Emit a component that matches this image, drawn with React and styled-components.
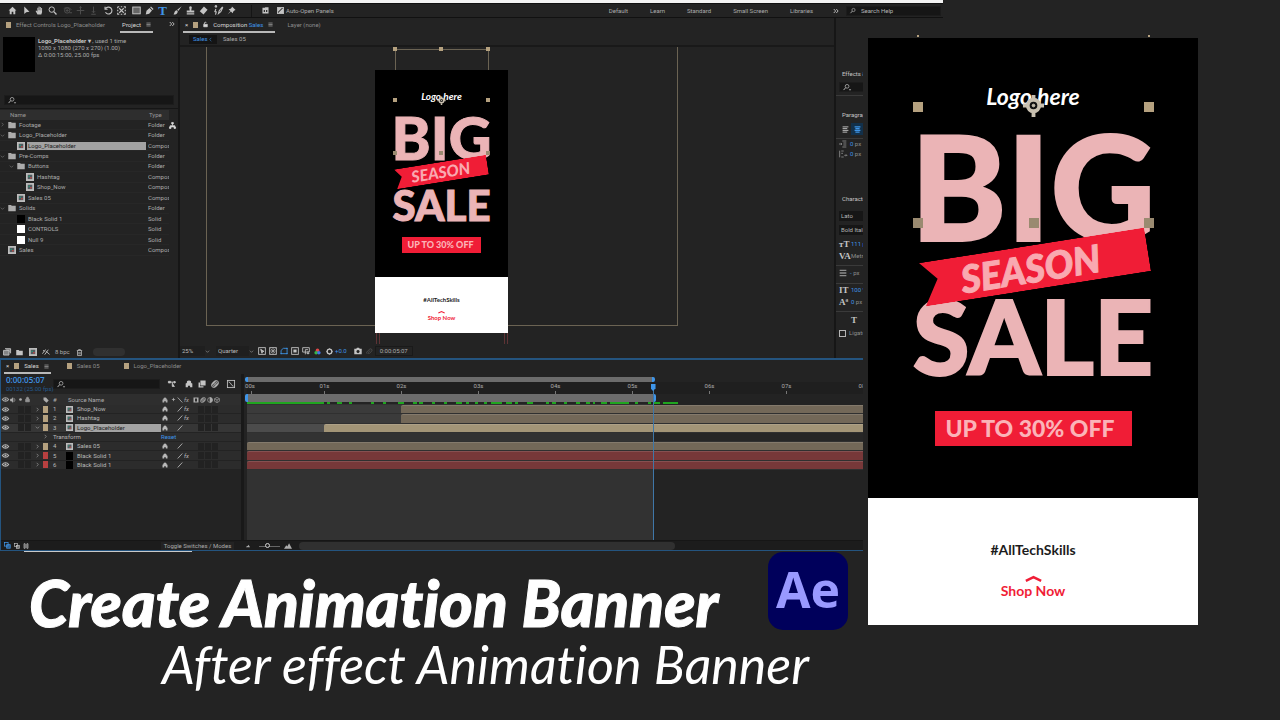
import React from 'react';
import styled, { createGlobalStyle, css } from 'styled-components';

const GlobalStyle = createGlobalStyle`
  * {
    box-sizing: border-box;
  }

  body {
    margin: 0;
    background: #232323;
    color: #acacac;
    font-family: Roboto, "Open Sans", "Noto Sans", sans-serif;
    font-size: 6px;
    line-height: 8px;
  }

  button, input, select {
    font: inherit;
    color: inherit;
  }
`;

const BLUE = '#3f95e8';
const TAN = '#b5a17f';
const PINK = '#ebb4b6';
const RED = '#f01d36';

/* ---------- shared bits ---------- */

const Svg = styled.svg`
  display: block;
  flex: none;
  width: ${p => p.$size || 10}px;
  height: ${p => p.$size || 10}px;
  fill: none;
  stroke: currentColor;
  stroke-width: 1.3;
  overflow: visible;
`;

const shapes = {
  home: <path d="M6 1 0.8 6H2.3V11H4.9V7.6H7.1V11H9.7V6H11.2Z" fill="currentColor" stroke="none" />,
  arrow: <path d="M3 0.5V10.5L5.6 8.2 10 7.8Z" fill="currentColor" stroke="none" />,
  hand: <path d="M3.3 11.3 0.8 6.6 1.7 6 3.2 7.4V2.2H4.4V5.6H4.8V0.8H6V5.6H6.5V1.2H7.7V5.9H8.2V2.6H9.4V8.4L8.4 11.3Z" fill="currentColor" stroke="none" />,
  zoom: <><circle cx="5" cy="4.8" r="3.6" /><path d="M7.7 7.5 11.3 11.3" strokeWidth="1.8" /></>,
  orbit: <><circle cx="5.5" cy="6" r="3.5" /><path d="M1 3.6C4 1.2 9 1.6 11 5M8.4 9H12M5.5 4V8M3.5 6H7.5" /></>,
  move: <path d="M6 0.8V11.2M1 6H11M4.6 2.2 6 0.8 7.4 2.2" />,
  dolly: <path d="M6 0.8V8.8M4 7 6 9 8 7M3 11H9" />,
  rotate: <path d="M2.2 3.4A4.6 4.6 0 1 1 2 8.4M1.4 1V4.4H4.8" strokeWidth="1.5" />,
  anchor: <><path d="M1 1H3M5 1H7M9 1H11V3M11 5V7M11 9V11H9M7 11H5M3 11H1V9M1 7V5M1 3V1" strokeWidth="1.6" /><path d="M3 3 9 9M9 3 3 9" strokeWidth="1.5" /></>,
  rect: <rect x="1" y="1.4" width="10" height="9" fill="#666" />,
  pen: <path d="M1 11.4 2 6.4 6 2.8 9.3 6 5.6 10.2ZM6.8 1.8 8 0.6 11.4 4 10.2 5.2Z" fill="currentColor" stroke="none" />,
  brush: <path d="M11.6 0.4 5.6 5 7 6.6ZM5 5.6 6.4 7.2C6 10.4 3.4 11.6 0.6 11.4 2 10 1.6 6.4 5 5.6Z" fill="currentColor" stroke="none" />,
  stamp: <path d="M4.2 1.2Q6 -0.4 7.8 1.2L7 6H11V8.6H1V6H5ZM1 9.8H11V11.2H1Z" fill="currentColor" stroke="none" />,
  eraser: <path d="M6.6 0.8 11.4 5 6 11.2 1 7Z" fill="currentColor" stroke="none" />,
  roto: <path d="M2.5 1.5A1 1 0 1 1 2.6 1.5M2.5 4 1.2 7.5 3 8 2 11.4M11.4 1 7 6.2 6 10 9 7.6 11.8 1.8" strokeWidth="1.5" />,
  pin: <path d="M6.6 0.6 11.4 5.4 9.8 6 8.4 7.4 7.6 9.8 5.2 7.4 0.8 11.4 4.6 6.8 2.2 4.4 4.8 3.6 6.2 2.2Z" fill="currentColor" stroke="none" />,
  panel: <path d="M0.8 1.4H4.8L5.6 0.6H11.2V11H0.8ZM3 5V8.4H5V5ZM7 5V8.4H9V5Z" fill="currentColor" fillRule="evenodd" stroke="none" />,
  more: <path d="M1.5 2 5.3 6 1.5 10M6.5 2 10.3 6 6.5 10" strokeWidth="1.8" />,
  menu: <path d="M1 2.5H11M1 6H11M1 9.5H11" strokeWidth="1.2" />,
  lock: <path d="M1.5 5.4H10.5V11.6H1.5ZM3.4 5V3A2.6 2.6 0 0 1 8.6 3V5" fill="currentColor" fillOpacity="0.8" />,
  unlock: <><path d="M1.5 5.4H10.5V11.6H1.5Z" fill="currentColor" /><path d="M3.4 5V2.6A2.4 2.4 0 0 1 8 2" strokeWidth="2" /></>,
  find: <><circle cx="7" cy="4" r="3.2" /><path d="M4.6 6.2 1 10.4" strokeWidth="1.7" /></>,
  findMenu: <><circle cx="7" cy="4" r="3.2" /><path d="M4.6 6.2 1 10.4" strokeWidth="1.7" /><path d="M10 9H14L12 11.4Z" fill="currentColor" stroke="none" /></>,
  folder: <path d="M0.4 1.6H4.6L5.6 2.8H11.6V10.8H0.4Z" fill="currentColor" stroke="none" />,
  comp: <><rect x="0" y="0" width="12" height="12" fill="#bcbcbc" stroke="none" /><rect x="2.6" y="2.6" width="6.8" height="6.6" fill="#505a60" stroke="none" /><path d="M3.4 4H6V6H3.4Z" fill="#2f8f72" stroke="none" /><path d="M6 6H8.6V8.4H6Z" fill="#b34a48" stroke="none" /></>,
  tree: <path d="M6 3V6.4M2 9V6.4H10V9M4.6 0.8H7.4V3.4H4.6ZM0.8 8.4H3.4V11H0.8ZM8.6 8.4H11.2V11H8.6Z" fill="currentColor" />,
  footage: <path d="M3 1H11.4V8M0.8 3.6H9V10.6H0.8Z" fill="currentColor" fillOpacity="0.6" />,
  wand: <path d="M0.6 8.6 5.4 2.2M4 10 9.4 2.6M5.6 4.6 11.4 9.6M2 3 3.4 5.4" />,
  trash: <path d="M1.4 2.6H10.6M4.4 2.4V1H7.6V2.4M2.6 3.4V11.2H9.4V3.4M5 5V9.4M7 5V9.4" />,
  down: <path d="M2 4 6 8 10 4" />,
  right: <path d="M4 2 8 6 4 10" />,
  left: <path d="M8 2 4 6 8 10" />,
  guide: <><rect x="1" y="1" width="10" height="10" /><path d="M4 3.4 9 6.6 6.6 7 6 9.4Z" fill="currentColor" /></>,
  grid: <><rect x="1" y="1" width="10" height="10" /><path d="M2.5 2.5 9.5 9.5M9.5 2.5 2.5 9.5M6 1V11M1 6H11" strokeWidth="0.9" /></>,
  mask: <path d="M1.6 10V5L5 2H10.6V10ZM0.4 10H2.8M9.4 2H11.8M9.4 10H11.8" />,
  region: <><rect x="1" y="1" width="10" height="10" /><rect x="3.6" y="3.8" width="4.8" height="4.4" fill="currentColor" stroke="none" /></>,
  views: <path d="M1 1H11V7.6H1ZM5 4V11M5 4H9M9 6V11M7 9.6H11" />,
  rgb: <><circle cx="6" cy="3.8" r="3" fill="#e04848" stroke="none" /><circle cx="3.6" cy="8" r="3" fill="#39b54a" stroke="none" /><circle cx="8.4" cy="8" r="3" fill="#3f74e8" stroke="none" /></>,
  aperture: <><circle cx="6" cy="6" r="4" strokeWidth="2.2" /><path d="M6 0.4V2M6 10V11.6M0.4 6H2M10 6H11.6" /></>,
  camera: <path d="M0.4 2.8H3.4L4.4 1.2H7.6L8.6 2.8H11.6V11H0.4ZM6 4.4A2.4 2.4 0 1 0 6.1 4.4Z" fill="currentColor" fillRule="evenodd" stroke="none" />,
  clip: <path d="M2 10A3 3 0 0 1 2.4 5.6L6.6 1.8A2.4 2.4 0 0 1 10 5L5.8 9.4A1.4 1.4 0 0 1 3.8 7.6L7.4 4" />,
  flow: <path d="M0.6 2H4V4.4H0.6ZM4 3.2H11.4M6.4 3.2V9.6H10M9 1.8 11.4 3.2 9 4.8Z" fill="currentColor" />,
  shy: <path d="M6 0.8A3.2 3.2 0 0 1 9.2 4.4L11 5.4V10.8H7.6V8.6H4.4V10.8H1V5.4L2.8 4.4A3.2 3.2 0 0 1 6 0.8Z" fill="currentColor" stroke="none" />,
  blend: <path d="M3.6 0.8H11.4V8.2H3.6ZM0.8 3.6H3V9.2H8.2V11.2H0.8Z" fill="currentColor" stroke="none" />,
  blur: <><circle cx="7.6" cy="4.4" r="3.6" /><circle cx="6" cy="6" r="3.6" /><circle cx="4.4" cy="7.6" r="3.6" /></>,
  graph: <><rect x="0.6" y="0.6" width="10.8" height="10.8" /><path d="M2.4 2.8C6 3 6 9 9.8 9.4" /></>,
  eye: <><path d="M0.6 6C3 2 9 2 11.4 6 9 10 3 10 0.6 6Z" strokeWidth="1.8" /><circle cx="6" cy="6" r="1.8" fill="currentColor" stroke="none" /></>,
  audio: <><path d="M1 4H3L6 1.4V10.6L3 8H1Z" fill="currentColor" /><path d="M8 2.4A4.4 4.4 0 0 1 8 9.6" /></>,
  dot: <circle cx="6" cy="6" r="3.2" fill="currentColor" stroke="none" />,
  tag: <path d="M1 1H6L11.4 7 7 11.4 1 6Z" fill="currentColor" stroke="none" />,
  star: <path d="M6 1 7.4 4.6 11 6 7.4 7.4 6 11 4.6 7.4 1 6 4.6 4.6Z" fill="currentColor" stroke="none" />,
  slash: <path d="M1.4 11 10.6 1" strokeWidth="1.7" />,
  backslash: <path d="M1.4 1 10.6 11" strokeWidth="1.7" />,
  half: <><circle cx="6" cy="6" r="4.8" /><path d="M6 1.2A4.8 4.8 0 0 1 6 10.8Z" fill="currentColor" /></>,
  cube: <path d="M6 0.8 10.8 3.4V8.6L6 11.2 1.2 8.6V3.4ZM1.2 3.4 6 6 10.8 3.4M6 6V11.2" />,
  film: <path d="M1 1H11V11H1ZM4 3V9H8V3Z" fill="currentColor" fillRule="evenodd" stroke="none" />,
  hills: <path d="M0 10 3.4 5 5 6.6 7.6 2 12 10Z" fill="currentColor" stroke="none" />,
  swap: <><rect x="1" y="1" width="6" height="6" /><rect x="4.6" y="4.6" width="6" height="6" fill="currentColor" fillOpacity="0.5" /></>,
  braces: <path d="M4 1H2.4V11H4M8 1H9.6V11H8M6 1V11M1 4H11M1 8H11" />,
  align: <path d="M1 1.5H11M1 4.5H9M1 7.5H11M1 10.5H9" strokeWidth="1.6" />,
  center: <path d="M1 1.5H11M2.4 4.5H9.6M1 7.5H11M2.4 10.5H9.6" strokeWidth="1.8" />,
  leading: <path d="M1 2H11M1 6H11M1 10H11" strokeWidth="2" />,
  indent: <path d="M5 1.5H11M6.5 4.5H11M6.5 7.5H11M5 10.5H11M0 6H4M2.8 4.4 4.4 6 2.8 7.6" />,
  outdent: <path d="M1 1V11M3.4 1.5H7M3.4 5H6M3.4 10.5H7M8 8H11.6M10.4 6.6 11.8 8 10.4 9.4" />,
};

function Icon({ name, size }) {
  return <Svg viewBox="0 0 12 12" $size={size} aria-hidden="true">{shapes[name]}</Svg>;
}

const IconButton = styled.button`
  display: flex;
  align-items: center;
  justify-content: center;
  flex: none;
  width: ${p => p.$w || 13}px;
  height: 12px;
  padding: 0;
  border: 0;
  background: ${p => p.$bg || 'none'};
  color: ${p => p.$color || '#c4c4c4'};
`;

const TextButton = styled.button`
  padding: 0;
  border: 0;
  background: none;
  white-space: nowrap;
  color: ${p => p.$color || '#acacac'};
`;

const Row = styled.div`
  display: flex;
  align-items: center;
  gap: ${p => p.$gap || 0}px;
`;

const Spacer = styled.div`
  flex: ${p => (p.$w ? 'none' : 1)};
  width: ${p => p.$w || 0}px;
`;

const Swatch = styled.span`
  flex: none;
  width: ${p => p.$w || 5}px;
  height: ${p => p.$h || 6}px;
  background: ${p => p.$color || TAN};
`;

const SearchField = styled.label`
  display: flex;
  align-items: center;
  gap: 5px;
  flex: ${p => (p.$w ? 'none' : 1)};
  width: ${p => (p.$w ? p.$w + 'px' : 'auto')};
  height: 10px;
  padding: 0 3px;
  background: #161616;
  border: 1px solid #1c1c1c;
  color: #b5b5b5;
  overflow: hidden;

  input {
    flex: 1;
    min-width: 0;
    height: 8px;
    padding: 0;
    border: 0;
    background: none;

    &::placeholder {
      color: #b5b5b5;
      opacity: 1;
    }
  }
`;

const Check = styled.input`
  appearance: none;
  flex: none;
  width: 7px;
  height: 7px;
  margin: 0;
  border: 1px solid #b5b5b5;
  background: ${p => (p.checked ? 'linear-gradient(135deg, #c4c4c4 30%, #333 45%, #c4c4c4 60%)' : 'none')};
`;

/* ---------- page ---------- */

const Page = styled.div`
  min-height: 100vh;
  background: #232323;
  overflow: hidden;
`;

const AppHeader = styled.header`
  width: calc(100% - 337px);
  border-top: 3px solid #f3f3f3;
`;

const Toolbar = styled(Row)`
  height: 15px;
  padding: 0 2px 0 6px;
  border-top: 1px solid #111;
  border-bottom: 1px solid #111;
`;

const Workspaces = styled.nav`
  display: flex;
  align-items: center;
  gap: 22px;
`;

const Content = styled.main`
  display: grid;
  grid-template-columns: minmax(0, 1fr) 330px;
  column-gap: 5px;
  align-items: start;
  padding-right: 82px;
`;

const Panels = styled.div`
  display: grid;
  grid-template-columns: 178px minmax(0, 1fr) 27px;
  column-gap: 2px;
  height: 340px;
  background: #161616;

  > * {
    min-width: 0;
    background: #232323;
  }
`;

const Panel = styled.section`
  display: flex;
  flex-direction: column;
  overflow: hidden;
`;

const Tabs = styled.div`
  display: flex;
  align-items: stretch;
  height: ${p => p.$h || 15}px;
`;

const Tab = styled.button`
  display: flex;
  align-items: center;
  gap: 5px;
  padding: 0 2px;
  border: 0;
  border-bottom: 2px solid ${p => (p.$active ? '#b9b9b9' : 'transparent')};
  background: none;
  white-space: nowrap;
  color: ${p => (p.$active ? '#d8d8d8' : '#8c8c8c')};

  em {
    font-style: normal;
    color: ${BLUE};
  }
`;

/* ---------- project panel ---------- */

const AssetInfo = styled.div`
  display: flex;
  gap: 3px;
  height: 62px;
  padding: 4px 3px 0;
  line-height: 7px;

  strong {
    color: #c4c4c4;
  }

  p {
    margin: 0;
    white-space: nowrap;
  }
`;

const Thumb = styled.div`
  width: 32px;
  height: 35px;
  background: #000;
`;

const ProjectTable = styled.table`
  width: 169px;
  height: 146px;
  margin-top: 1px;
  table-layout: fixed;
  border-collapse: collapse;
  border-spacing: 0;

  th, td {
    padding: 0;
    overflow: hidden;
    white-space: nowrap;
    text-align: left;
    font-weight: normal;
    line-height: 8px;
  }

  th {
    height: 10px;
    padding-left: 10px;
    background: #2e2e2e;
    color: #999;
  }

  th:last-child {
    padding-left: 1px;
  }

  td {
    border-bottom: 1px solid #272727;
  }
`;

const Item = styled.div`
  display: flex;
  align-items: center;
  gap: 2px;
  padding-left: ${p => p.$depth * 9}px;
  padding-right: 2px;
  color: ${p => (p.$selected ? '#1c1c1c' : '#acacac')};

  > span:last-child {
    flex: ${p => (p.$selected ? 1 : 'none')};
    padding-left: 1px;
    background: ${p => (p.$selected ? '#a3a3a3' : 'none')};
  }
`;

const Twirl = styled.span`
  display: flex;
  flex: none;
  width: 6px;
  color: #8c8c8c;
`;

const PanelFooter = styled.footer`
  display: flex;
  align-items: center;
  height: ${p => p.$h || 12}px;
  margin-top: auto;
`;

const Pill = styled.div`
  height: 8px;
  flex: ${p => (p.$w ? 'none' : 1)};
  width: ${p => (p.$w ? p.$w + 'px' : 'auto')};
  margin-left: 7px;
  border-radius: 4px;
  background: #303030;
`;

const items = [
  { name: 'Footage', type: 'Folder', kind: 'folder', depth: 0, twirl: 'right' },
  { name: 'Logo_Placeholder', type: 'Folder', kind: 'folder', depth: 0, twirl: 'down' },
  { name: 'Logo_Placeholder', type: 'Composition', kind: 'comp', depth: 1, selected: true },
  { name: 'Pre-Comps', type: 'Folder', kind: 'folder', depth: 0, twirl: 'down' },
  { name: 'Buttons', type: 'Folder', kind: 'folder', depth: 1, twirl: 'down' },
  { name: 'Hashtag', type: 'Composition', kind: 'comp', depth: 2 },
  { name: 'Shop_Now', type: 'Composition', kind: 'comp', depth: 2 },
  { name: 'Sales 05', type: 'Composition', kind: 'comp', depth: 1 },
  { name: 'Solids', type: 'Folder', kind: 'folder', depth: 0, twirl: 'down' },
  { name: 'Black Solid 1', type: 'Solid', color: '#000', depth: 1 },
  { name: 'CONTROLS', type: 'Solid', color: '#fff', depth: 1 },
  { name: 'Null 9', type: 'Solid', color: '#fff', depth: 1 },
  { name: 'Sales', type: 'Composition', kind: 'comp', depth: 0 },
];

const TableWrap = styled.div`
  display: flex;
  align-items: flex-start;
  border-top: 1px solid #161616;
  margin-top: 3px;

  > svg {
    margin-top: 13px;
    color: #d8d8d8;
  }
`;

function ProjectPanel() {
  return (
    <Panel>
      <Tabs>
        <Spacer $w={4} />
        <Tab><Swatch />Effect Controls Logo_Placeholder</Tab>
        <Spacer />
        <Tab $active>Project <Icon name="menu" size={5} /></Tab>
        <Spacer $w={12} />
        <IconButton aria-label="More panels"><Icon name="more" size={6} /></IconButton>
      </Tabs>
      <AssetInfo>
        <Thumb />
        <div>
          <p><strong>Logo_Placeholder ▾</strong> , used 1 time</p>
          <p>1080 x 1080 (270 x 270) (1.00)</p>
          <p>Δ 0:00:15:00, 25.00 fps</p>
        </div>
      </AssetInfo>
      <Row>
        <Spacer $w={4} />
        <SearchField>
          <Icon name="findMenu" size={7} />
          <input aria-label="Search project" />
        </SearchField>
        <Spacer $w={4} />
      </Row>
      <TableWrap>
        <ProjectTable>
          <colgroup>
            <col />
            <col width="21" />
          </colgroup>
          <thead>
            <tr><th>Name</th><th>Type</th></tr>
          </thead>
          <tbody>
            {items.map((item, i) => (
              <tr key={i}>
                <td>
                  <Item $depth={item.depth} $selected={item.selected}>
                    <Twirl>{item.twirl && <Icon name={item.twirl} size={5} />}</Twirl>
                    {item.kind
                      ? <Icon name={item.kind} size={8} />
                      : <Swatch $w={8} $h={8} $color={item.color} />}
                    <span>{item.name}</span>
                  </Item>
                </td>
                <td>{item.type}</td>
              </tr>
            ))}
          </tbody>
        </ProjectTable>
        <Icon name="tree" size={7} />
      </TableWrap>
      <PanelFooter>
        <IconButton aria-label="Interpret footage"><Icon name="footage" size={8} /></IconButton>
        <IconButton aria-label="New folder"><Icon name="folder" size={7} /></IconButton>
        <IconButton aria-label="New composition"><Icon name="comp" size={8} /></IconButton>
        <IconButton aria-label="Adjust"><Icon name="wand" size={8} /></IconButton>
        <Spacer $w={3} />
        <TextButton>8 bpc</TextButton>
        <Spacer $w={3} />
        <IconButton aria-label="Delete"><Icon name="trash" size={7} /></IconButton>
        <Pill $w={32} />
      </PanelFooter>
    </Panel>
  );
}

/* ---------- banner artwork ---------- */

const large = {
  width: 330, height: 587, split: 460,
  logo: 23, logoTop: 47,
  big: 145, bigTop: 99, sale: 103, saleTop: 263, outline: 2,
  ribbonW: 228, ribbonH: 44, ribbonX: 53, ribbonY: 207, ribbonText: 38, ribbonPad: 39,
  offer: 23, offerTop: 373, offerW: 197, offerH: 35, offerPad: 6,
  tag: 14, tagTop: 505, shop: 14, shopTop: 546, chevron: 17, chevronTop: 538,
};

const small = {
  width: 133, height: 263, split: 207,
  logo: 10, logoTop: 21,
  big: 59, bigTop: 48, sale: 42, saleTop: 121, outline: 1,
  ribbonW: 93, ribbonH: 20, ribbonX: 20, ribbonY: 92, ribbonText: 16, ribbonPad: 16,
  offer: 9, offerTop: 167, offerW: 79, offerH: 16, offerPad: 2,
  tag: 6, tagTop: 227, shop: 6, shopTop: 245, chevron: 7, chevronTop: 241,
};

const Art = styled.article`
  position: relative;
  width: ${p => p.$s.width}px;
  height: ${p => p.$s.height}px;
  background: linear-gradient(#000 ${p => p.$s.split}px, #fff ${p => p.$s.split}px);
  font-family: Lato, sans-serif;
  text-align: center;
`;

// every line of the artwork is a layer on the canvas
const Layer = styled.div`
  position: absolute;
  left: 0;
  right: 0;
  top: ${p => p.$top}px;
  font-size: ${p => p.$size}px;
  line-height: ${p => p.$line || p.$size}px;
  font-weight: ${p => p.$weight || 700};
  font-style: ${p => (p.$italic ? 'italic' : 'normal')};
  color: ${p => p.$color};
  -webkit-text-stroke: ${p => p.$outline || 0}px ${p => p.$color};
  white-space: nowrap;

  svg {
    margin: 0 auto;
  }
`;

const Ribbon = styled.div`
  position: absolute;
  left: ${p => p.$s.ribbonX}px;
  top: ${p => p.$s.ribbonY}px;
  width: ${p => p.$s.ribbonW}px;
  height: ${p => p.$s.ribbonH}px;
  padding-left: ${p => p.$s.ribbonPad}px;
  transform: rotate(-9deg);
  clip-path: polygon(0 0, 100% 0, 100% 100%, 0 100%, 7% 42%);
  background: ${RED};
  color: #f9a9b0;
  font-size: ${p => p.$s.ribbonText}px;
  line-height: ${p => p.$s.ribbonH}px;
  font-weight: 900;
  font-style: italic;
  text-align: left;
  -webkit-text-stroke: ${p => p.$s.outline - 1}px #f9a9b0;
`;

const Offer = styled.span`
  display: block;
  width: ${p => p.$s.offerW}px;
  height: ${p => p.$s.offerH}px;
  margin: 0 auto;
  padding-right: ${p => p.$s.offerPad}px;
  background: ${RED};
  line-height: ${p => p.$s.offerH}px;
`;

const Handle = styled.i`
  position: absolute;
  left: ${p => p.$x}px;
  top: ${p => p.$y}px;
  width: ${p => p.$size}px;
  height: ${p => p.$size}px;
  background: ${p => (p.$dim ? '#9a8a70' : TAN)};
`;

const Anchor = styled.svg`
  position: absolute;
  left: ${p => p.$x}px;
  top: ${p => p.$y}px;
  width: ${p => p.$size}px;
  height: ${p => p.$size}px;
  fill: none;
  stroke: #c9c0b0;
  stroke-width: 4;
`;

function Banner({ s }) {
  return (
    <Art $s={s}>
      <Layer $top={s.logoTop} $size={s.logo} $italic $color="#fff">Logo here</Layer>
      <Layer $top={s.bigTop} $size={s.big} $line={Math.round(s.big * 0.67)} $weight={900} $outline={s.outline} $color={PINK}>BIG</Layer>
      <Layer $top={s.saleTop} $size={s.sale} $line={Math.round(s.sale * 0.67)} $weight={900} $outline={s.outline} $color={PINK}>SALE</Layer>
      <Ribbon $s={s}>SEASON</Ribbon>
      <Layer $top={s.offerTop} $size={s.offer} $weight={900} $color="#fbb3b8"><Offer $s={s}>UP TO 30% OFF</Offer></Layer>
      <Layer $top={s.tagTop} $size={s.tag} $color="#1c1c1c">#AllTechSkills</Layer>
      <Layer $top={s.chevronTop} $size={s.chevron} $line={s.chevron} $color={RED}>
        <Svg viewBox="0 0 12 4" style={{ width: s.chevron, height: s.chevron / 3 }}>
          <path d="M0.6 3.4 6 0.8 11.4 3.4" strokeWidth="1.8" />
        </Svg>
      </Layer>
      <Layer $top={s.shopTop} $size={s.shop} $color={RED}>Shop Now</Layer>
    </Art>
  );
}

function AnchorPoint({ x, y, size }) {
  return (
    <Anchor viewBox="0 0 24 24" $x={x} $y={y} $size={size} aria-hidden="true">
      <circle cx="12" cy="12" r="6" fill="#111" />
      <circle cx="12" cy="12" r="1.4" fill="#c9c0b0" strokeWidth="1" />
      <path d="M12 1V5M12 19V24M1 12H5M19 12H23" />
    </Anchor>
  );
}

/* ---------- composition panel ---------- */

const Breadcrumb = styled(Row)`
  height: 14px;
  padding-left: 9px;
  border-bottom: 2px solid #191919;
`;

const Crumb = styled.button`
  display: flex;
  align-items: center;
  justify-content: space-between;
  height: 9px;
  padding: 0 4px;
  border: 0;
  background: ${p => (p.$active ? '#141414' : 'none')};
  color: ${p => (p.$active ? BLUE : '#acacac')};
  min-width: 28px;
`;

const Viewer = styled.div`
  position: relative;
  flex: 1;
  overflow: hidden;
`;

const Guide = styled.div`
  position: absolute;
  left: ${p => p.$x}px;
  top: ${p => p.$y}px;
  width: ${p => p.$w}px;
  height: ${p => p.$h}px;
  border: 1px solid ${p => p.$color || '#6b6353'};
  border-top-width: ${p => (p.$open ? 0 : 1)}px;
`;

const ArtSlot = styled.div`
  position: absolute;
  left: 195px;
  top: 23px;
`;

const Select = styled.select`
  appearance: none;
  width: ${p => p.$w}px;
  height: 10px;
  padding: 0 2px;
  border: 0;
  background: #1f1f1f;
  color: #b9b9b9;
`;

const Timecode = styled.span`
  padding: 0 4px;
  border: 1px solid #1a1a1a;
`;

const handles = [[213, 0], [259, 0], [306, 0], [213, 51], [306, 51], [213, 104, 1], [259, 104, 1], [306, 104, 1]];

function CompositionPanel() {
  return (
    <Panel>
      <Tabs>
        <Spacer $w={3} />
        <Tab $active>
          <span>×</span><Swatch /><Icon name="unlock" size={5} />
          <span>Composition <em>Sales</em></span>
          <Icon name="menu" size={5} />
        </Tab>
        <Spacer $w={10} />
        <Tab>Layer (none)</Tab>
      </Tabs>
      <Breadcrumb $gap={2}>
        <Crumb $active>Sales <Icon name="left" size={5} /></Crumb>
        <Crumb>Sales 05</Crumb>
      </Breadcrumb>
      <Viewer>
        <Guide $x={26} $y={0} $w={472} $h={279} $open />
        <Guide $x={196} $y={240} $w={132} $h={80} $color="#5e3335" />
        <Guide $x={199} $y={240} $w={126} $h={80} $color="#5e3335" />
        <Guide $x={215} $y={2} $w={94} $h={40} />
        <ArtSlot><Banner s={small} /></ArtSlot>
        {handles.map(([x, y, dim]) => <Handle key={`${x}-${y}`} $x={x} $y={y} $dim={dim} $size={4} />)}
        <AnchorPoint x={257} y={49} size={9} />
      </Viewer>
      <PanelFooter $h={14}>
        <Select $w={25} aria-label="Magnification" defaultValue="25%"><option>25%</option></Select>
        <Icon name="down" size={5} />
        <Spacer $w={6} />
        <Select $w={33} aria-label="Resolution" defaultValue="Quarter"><option>Quarter</option></Select>
        <Icon name="down" size={5} />
        <Spacer $w={2} />
        <IconButton $w={11} aria-label="Choose grid"><Icon name="guide" size={8} /></IconButton>
        <IconButton $w={11} aria-label="Transparency grid"><Icon name="grid" size={8} /></IconButton>
        <IconButton $w={11} $color={BLUE} aria-label="Mask visibility"><Icon name="mask" size={8} /></IconButton>
        <IconButton $w={11} aria-label="Region of interest"><Icon name="region" size={8} /></IconButton>
        <IconButton $w={11} aria-label="View layout"><Icon name="views" size={8} /></IconButton>
        <IconButton $w={12} aria-label="Channels"><Icon name="rgb" size={7} /></IconButton>
        <IconButton $w={12} aria-label="Reset exposure"><Icon name="aperture" size={7} /></IconButton>
        <TextButton $color={BLUE}>+0.0</TextButton>
        <Spacer $w={6} />
        <IconButton $w={11} aria-label="Take snapshot"><Icon name="camera" size={8} /></IconButton>
        <IconButton $w={11} $color="#555" aria-label="Show snapshot"><Icon name="clip" size={7} /></IconButton>
        <Timecode>0:00:05:07</Timecode>
      </PanelFooter>
    </Panel>
  );
}

/* ---------- side panel ---------- */

const SidePanel = styled.aside`
  display: flex;
  flex-direction: column;
  overflow: hidden;
  white-space: nowrap;
`;

const SideGroup = styled.div`
  padding: ${p => p.$pad || 0}px 0 ${p => p.$end || 0}px 3px;
  border-top: ${p => (p.$line ? '1px solid #3a3a3a' : 0)};
`;

const SideTitle = styled.h2`
  margin: 0;
  padding-left: 3px;
  font-size: 6px;
  font-weight: normal;
  line-height: 16px;
  color: #c4c4c4;
`;

const Metric = styled.div`
  display: flex;
  align-items: center;
  gap: 3px;
  height: ${p => p.$h || 12}px;
  color: #8c8c8c;

  b {
    width: 9px;
    flex: none;
    font: bold 9px/10px "Liberation Serif", serif;
    color: #c4c4c4;
  }

  em {
    font-style: normal;
    color: ${BLUE};
  }
`;

const FontField = styled.select`
  appearance: none;
  display: block;
  width: 36px;
  height: 10px;
  margin-top: 4px;
  padding: 0 2px;
  border: 0;
  background: #161616;
  color: #b5b5b5;
`;

function CharacterPanel() {
  return (
    <SidePanel>
      <SideGroup $pad={48} $end={3}>
        <SideTitle>Effects &amp; Presets</SideTitle>
        <SearchField $w={40}><Icon name="findMenu" size={7} /><input aria-label="Search effects" /></SearchField>
      </SideGroup>
      <SideGroup $pad={11} $end={3} $line>
        <SideTitle>Paragraph</SideTitle>
        <Row>
          <IconButton $w={12} aria-label="Align left"><Icon name="align" size={7} /></IconButton>
          <IconButton $w={12} $bg="#12304a" $color={BLUE} aria-label="Align center"><Icon name="center" size={7} /></IconButton>
        </Row>
      </SideGroup>
      <SideGroup $line $end={32}>
        <Metric $h={10}><Icon name="indent" size={8} /><span><em>0</em> px</span></Metric>
        <Metric $h={10}><Icon name="outdent" size={8} /><span><em>0</em> px</span></Metric>
      </SideGroup>
      <SideGroup $end={3}>
        <SideTitle>Character</SideTitle>
        <FontField aria-label="Font family" defaultValue="Lato"><option>Lato</option></FontField>
        <FontField aria-label="Font style" defaultValue="Bold Italic"><option>Bold Italic</option></FontField>
      </SideGroup>
      <SideGroup $end={3}>
        <Metric><b>тT</b><em>111 px</em></Metric>
        <Metric><b>VA</b><span>Metrics</span></Metric>
      </SideGroup>
      <SideGroup $line $pad={1} $end={4}>
        <Metric><Icon name="leading" size={8} /><span><em>-</em> px</span></Metric>
      </SideGroup>
      <SideGroup $line $end={3}>
        <Metric><b>IT</b><em>100 %</em></Metric>
        <Metric><b>Aª</b><span><em>0</em> px</span></Metric>
      </SideGroup>
      <SideGroup $line $pad={1}>
        <Metric $h={14}><b /><b>T</b></Metric>
        <Metric as="label"><Check type="checkbox" /><span>Ligatures</span></Metric>
      </SideGroup>
    </SidePanel>
  );
}

/* ---------- timeline ---------- */

const TOTAL = 8;
const PLAYHEAD = 5.28;

const layers = [
  { n: 1, name: 'Shop_Now', start: 2, fx: true },
  { n: 2, name: 'Hashtag', start: 2, fx: true },
  { n: 3, name: 'Logo_Placeholder', start: 1, selected: true },
  { transform: true },
  { n: 4, name: 'Sales 05', start: 0 },
  { n: 5, name: 'Black Solid 1', start: 0, fx: true, solid: true },
  { n: 6, name: 'Black Solid 1', start: 0, solid: true },
];

// cached frame runs, [from, length] on a 616 unit ruler
const cached = [
  [0, 77], [80, 3], [90, 5], [102, 3], [124, 3], [136, 3], [151, 6], [166, 4], [172, 4], [185, 3],
  [197, 3], [209, 6], [219, 3], [228, 3], [237, 3], [244, 11], [259, 6], [268, 3], [280, 6], [299, 3],
  [305, 4], [317, 3], [329, 4], [339, 4], [346, 2], [354, 6], [363, 19], [388, 3], [401, 3], [406, 7], [416, 15],
];

const TimelineShell = styled.section`
  height: 193px;
  border: solid #24547f;
  border-width: 2px 0 1px 1px;
  background: #232323;
  overflow: hidden;
  display: flex;
  flex-direction: column;
`;

const TimelineBody = styled.div`
  flex: 1;
  display: grid;
  grid-template-columns: 243px minmax(0, 1fr);
  min-height: 0;
`;

const LayerList = styled.div`
  border-right: 3px solid #191919;
`;

const TimeControls = styled(Row)`
  height: 20px;
  padding-left: 5px;
`;

const CurrentTime = styled.div`
  width: 47px;
  color: #24598c;
  white-space: nowrap;

  strong {
    display: block;
    font: 600 8px/10px "Open Sans", "Noto Sans", sans-serif;
    color: ${BLUE};
  }
`;

const LayerGrid = styled.div`
  display: grid;
  grid-template-columns: 16px 17px 8px 10px 13px 9px 86px 10px 6px 7px 9px 1fr;
  align-items: center;
  padding-left: 1px;
  white-space: nowrap;
`;

const LayerHead = styled(LayerGrid)`
  height: 11px;
  background: #2e2e2e;
  color: #acacac;
`;

const SourceName = styled.span`
  padding-left: 2px;
`;

const Rows = styled.div`
  display: grid;
  height: 65px;
  grid-auto-rows: minmax(0, 1fr);
`;

const LayerRow = styled(LayerGrid)`
  background: ${p => (p.$selected ? '#363636' : '#2c2c2c')};
  border-bottom: 1px solid #232323;
  color: #b9b9b9;
  line-height: 8px;
`;

const LayerName = styled.span`
  padding-left: 2px;
  overflow: hidden;
  ${p => p.$selected && css`
    background: #a3a3a3;
    color: #1c1c1c;
  `}
`;

const Cells = styled.span`
  display: grid;
  grid-template-columns: repeat(${p => p.$n}, 6px);
  gap: 1px;
  height: 7px;

  i {
    background: #222;
  }
`;

const Tracks = styled.div`
  position: relative;
  display: flex;
  flex-direction: column;
  overflow: hidden;
  padding: 3px 0 0 3px;
`;

const Span = styled.div`
  height: ${p => p.$h}px;
  margin-left: -2px;
  background: #6c6c6c;
  border-left: 3px solid ${BLUE};
  border-right: 3px solid ${BLUE};
  border-radius: 2px;
`;

const Ruler = styled.div`
  display: grid;
  grid-template-columns: repeat(8, minmax(0, 1fr)) 0;
  height: 12px;
  background: #1f1f1f;

  span {
    margin-left: -6px;
    width: 13px;
    text-align: center;
    background: linear-gradient(#777, #777) 6px 9px / 1px 3px no-repeat;
  }

  span:first-child {
    margin-left: -2px;
    text-align: left;
  }
`;

const Cache = styled.svg`
  display: block;
  width: 100%;
  height: 2px;
  fill: #1fa51f;
`;

const TrackArea = styled.div`
  flex: 1;
  padding-top: 1px;
  background: linear-gradient(to right, #323232 ${p => p.$at}%, #232323 ${p => p.$at}%);
`;

const Lane = styled.div`
  border-bottom: 1px solid #303030;
  background: linear-gradient(to right, ${p => p.$color || '#3b3b3b'} ${p => p.$at}%, #262626 ${p => p.$at}%);
`;

const Bar = styled.div`
  height: 100%;
  background: ${p => p.$color};
  border-top: 1px solid rgba(255, 255, 255, 0.12);
  border-top-left-radius: 2px;
`;

const Playhead = styled.div`
  position: absolute;
  top: 10px;
  bottom: 0;
  width: 1px;
  background: #3f77a8;

  &::before {
    content: '';
    position: absolute;
    left: -2px;
    top: 0;
    width: 5px;
    height: 7px;
    background: ${BLUE};
    clip-path: polygon(0 0, 100% 0, 100% 60%, 50% 100%, 0 60%);
  }
`;

const TimelineFooter = styled(Row)`
  height: 10px;
  padding-left: 2px;
  border-top: 1px solid #161616;
  background: #1c1c1c;
`;

const ModesButton = styled(TextButton)`
  width: 73px;
  background: #232323;
`;

const ZoomSlider = styled.input`
  appearance: none;
  width: 21px;
  height: 6px;
  margin: 0 4px;
  background: linear-gradient(#666, #666) 0 3px / 100% 1px no-repeat;

  &::-webkit-slider-thumb {
    appearance: none;
    width: 5px;
    height: 5px;
    border: 1px solid #d0d0d0;
    border-radius: 50%;
    background: #232323;
  }
`;

function barColor(layer) {
  if (layer.solid) return '#773839';
  return layer.selected ? '#a39577' : '#736858';
}

function TimelineLayer({ layer }) {
  if (layer.transform) {
    return (
      <LayerRow>
        <span /><span /><span />
        <span><Icon name="right" size={5} /></span>
        <span>Transform</span><span /><span />
        <TextButton $color={BLUE}>Reset</TextButton>
      </LayerRow>
    );
  }
  return (
    <LayerRow $selected={layer.selected}>
      <Icon name="eye" size={7} />
      <Cells $n={2}><i /><i /></Cells>
      <Icon name={layer.selected ? 'down' : 'right'} size={5} />
      <Swatch $h={7} $color={layer.solid ? '#b84040' : TAN} />
      <span>{layer.n}</span>
      {layer.solid ? <Swatch $w={7} $h={8} $color="#000" /> : <Icon name="comp" size={7} />}
      <LayerName $selected={layer.selected}>{layer.name}</LayerName>
      <Row><Spacer $w={1} /><Icon name="shy" size={6} /></Row>
      <span />
      <Icon name="slash" size={6} />
      <i>{layer.fx ? 'fx' : ''}</i>
      <Row><Spacer $w={5} /><Cells $n={3}><i /><i /><i /></Cells></Row>
    </LayerRow>
  );
}

function Timeline() {
  const at = (PLAYHEAD / TOTAL) * 100;
  return (
    <TimelineShell>
      <Tabs $h={14}>
        <Spacer $w={3} />
        <Tab $active><span>×</span><Swatch />Sales <Icon name="menu" size={5} /></Tab>
        <Spacer $w={14} />
        <Tab><Swatch />Sales 05</Tab>
        <Spacer $w={20} />
        <Tab><Swatch />Logo_Placeholder</Tab>
      </Tabs>
      <TimelineBody>
        <LayerList>
          <TimeControls>
            <CurrentTime><strong>0:00:05:07</strong>00132 (25.00 fps)</CurrentTime>
            <SearchField $w={107}><Icon name="findMenu" size={7} /><input aria-label="Search layers" /></SearchField>
            <Spacer $w={5} />
            <IconButton aria-label="Mini-flowchart"><Icon name="flow" size={8} /></IconButton>
            <Spacer $w={4} />
            <IconButton aria-label="Hide shy layers"><Icon name="shy" size={8} /></IconButton>
            <IconButton aria-label="Frame blending"><Icon name="blend" size={8} /></IconButton>
            <IconButton aria-label="Motion blur"><Icon name="blur" size={8} /></IconButton>
            <Spacer $w={3} />
            <IconButton aria-label="Graph editor"><Icon name="graph" size={8} /></IconButton>
          </TimeControls>
          <LayerHead>
            <Row $gap={1}><Icon name="eye" size={7} /><Icon name="audio" size={6} /></Row>
            <Row $gap={2}><Icon name="dot" size={5} /><Icon name="lock" size={5} /></Row>
            <span />
            <Icon name="tag" size={6} />
            <span>#</span>
            <SourceName>Source Name</SourceName>
            <span />
            <Row><Spacer $w={1} /><Icon name="shy" size={6} /></Row>
            <Icon name="star" size={5} />
            <Icon name="backslash" size={6} />
            <i>fx</i>
            <Row $gap={1}>
              <Icon name="film" size={6} /><Icon name="blur" size={6} /><Icon name="half" size={6} /><Icon name="cube" size={6} />
            </Row>
          </LayerHead>
          <Rows>
            {layers.map((layer, i) => <TimelineLayer key={i} layer={layer} />)}
          </Rows>
        </LayerList>
        <Tracks>
          <Span $h={5} style={{ width: `calc(${at}% + 3px)` }} />
          <Ruler>
            {Array.from({ length: 9 }, (_, i) => <span key={i}>0{i}s</span>)}
          </Ruler>
          <Span $h={8} style={{ width: `calc(${at}% + 4px)` }} />
          <Cache viewBox="0 0 616 2" preserveAspectRatio="none" aria-hidden="true">
            {cached.map(([x, w]) => <rect key={x} x={x} width={w} height="2" />)}
          </Cache>
          <TrackArea $at={at}>
            <Rows>
              {layers.map((layer, i) => (
                <Lane key={i} $at={at} $color={layer.selected ? '#4c4c4c' : layer.transform ? '#323232' : undefined}>
                  {!layer.transform && (
                    <Bar $color={barColor(layer)} style={{ marginLeft: `${(layer.start / TOTAL) * 100}%` }} />
                  )}
                </Lane>
              ))}
            </Rows>
          </TrackArea>
          <Playhead style={{ left: `${at}%` }} />
        </Tracks>
      </TimelineBody>
      <TimelineFooter>
        <IconButton $w={9} $color={BLUE} aria-label="Layer switches"><Icon name="swap" size={7} /></IconButton>
        <IconButton $w={9} aria-label="Transfer controls"><Icon name="swap" size={6} /></IconButton>
        <IconButton $w={9} aria-label="In and out"><Icon name="braces" size={6} /></IconButton>
        <Spacer $w={131} />
        <ModesButton>Toggle Switches / Modes</ModesButton>
        <Spacer $w={12} />
        <Icon name="hills" size={4} />
        <Spacer $w={5} />
        <ZoomSlider type="range" min="0" max="10" defaultValue="4" aria-label="Timeline zoom" />
        <Icon name="hills" size={8} />
        <Pill $w={376} />
      </TimelineFooter>
    </TimelineShell>
  );
}

/* ---------- titles ---------- */

const TaskStrip = styled.div`
  width: 168px;
  height: 1px;
  margin-left: 24px;
  background: #c9c9c9;
`;

const Titles = styled.div`
  font-family: Lato, sans-serif;
  font-style: italic;
  font-variant-ligatures: none;
  color: #fff;
  white-space: nowrap;
`;

const TitleRow = styled.div`
  display: flex;
  justify-content: space-between;
  padding: 0 15px 0 29px;
`;

const Title = styled.h1`
  margin: 0;
  padding-top: 14px;
  font-size: 64px;
  line-height: 74px;
  font-weight: 900;
  -webkit-text-stroke: 1px #fff;
`;

const Subtitle = styled.p`
  margin: 0;
  padding: 0 54px 0 0;
  text-align: right;
  font-size: 52px;
  line-height: 48px;
  font-weight: 400;
`;

const AeLogo = styled.div`
  width: 80px;
  height: 78px;
  border-radius: 15px;
  background: #00005b;
  color: #9999ff;
  font: normal 700 50px/74px "Open Sans", "Noto Sans", sans-serif;
  text-align: center;
`;

const Preview = styled.div`
  position: relative;
  margin-top: 20px;
`;

const tools = [
  ['home'],
  ['arrow', 'hand', 'zoom'],
  ['orbit', 'move', 'dolly'],
  ['rotate', 'anchor'],
  ['rect', 'pen', 'type'],
  ['brush', 'stamp', 'eraser'],
  ['roto', 'pin'],
];

const TypeTool = styled(IconButton)`
  font-family: "Liberation Serif", serif;
  font-size: 13px;
  font-weight: bold;
`;

const Divider = styled.div`
  width: 1px;
  height: 12px;
  background: #151515;
`;

export default function App() {
  return (
    <>
      <GlobalStyle />
      <Page>
        <AppHeader>
          <Toolbar>
            <Row $gap={2}>
              {tools.map((group, i) => (
                <Row key={i}>
                  {group.map(name => (
                    name === 'type'
                      ? <TypeTool key={name} $color={BLUE} aria-label="Type tool">T</TypeTool>
                      : (
                        <IconButton key={name} $w={i === 0 ? 12 : 13} $color={i === 2 ? '#4e4e4e' : undefined} aria-label={name}>
                          <Icon name={name} size={9} />
                        </IconButton>
                      )
                  ))}
                </Row>
              ))}
            </Row>
            <Spacer $w={13} />
            <Divider />
            <Spacer $w={7} />
            <IconButton aria-label="Panels"><Icon name="panel" size={7} /></IconButton>
            <Spacer $w={5} />
            <Row as="label" $gap={2}><Check type="checkbox" checked readOnly />Auto-Open Panels</Row>
            <Spacer />
            <Workspaces>
              <TextButton>Default</TextButton>
              <TextButton>Learn</TextButton>
              <TextButton>Standard</TextButton>
              <TextButton>Small Screen</TextButton>
              <TextButton>Libraries</TextButton>
            </Workspaces>
            <Spacer $w={16} />
            <IconButton aria-label="More workspaces"><Icon name="more" size={6} /></IconButton>
            <Spacer $w={4} />
            <SearchField $w={95}>
              <Icon name="find" size={6} />
              <input aria-label="Search Help" placeholder="Search Help" />
            </SearchField>
          </Toolbar>
        </AppHeader>
        <Content>
          <div>
            <Panels>
              <ProjectPanel />
              <CompositionPanel />
              <CharacterPanel />
            </Panels>
            <Timeline />
            <TaskStrip />
            <Titles>
              <TitleRow>
                <Title>Create Animation Banner</Title>
                <AeLogo>Ae</AeLogo>
              </TitleRow>
              <Subtitle>After effect Animation Banner</Subtitle>
            </Titles>
          </div>
          <Preview>
            <Banner s={large} />
            {[[45, 64], [276, 64], [45, 180, 1], [161, 180, 1], [276, 180, 1]].map(([x, y, dim]) => (
              <Handle key={`${x}-${y}`} $x={x} $y={y} $dim={dim} $size={10} />
            ))}
            <Handle $x={49} $y={-3} $size={2} />
            <Handle $x={280} $y={-3} $size={2} />
            <AnchorPoint x={154} y={56} size={23} />
          </Preview>
        </Content>
      </Page>
    </>
  );
}
